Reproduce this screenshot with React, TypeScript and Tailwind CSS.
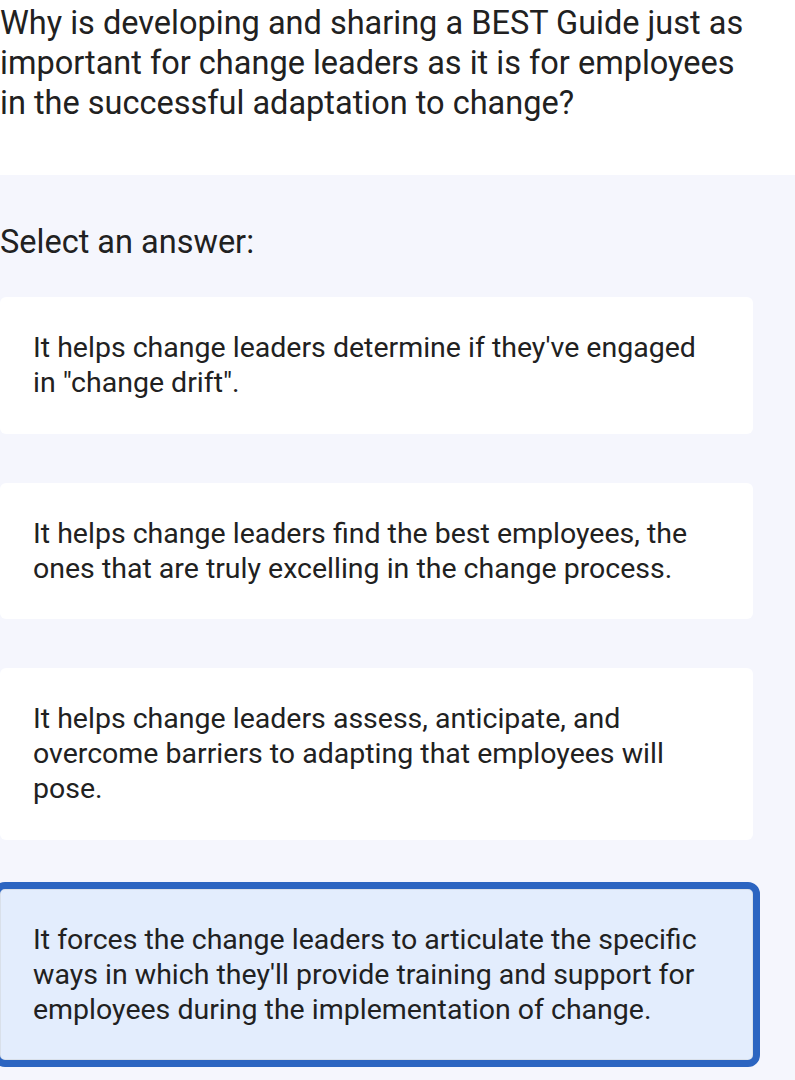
import React from 'react';

const answers = [
  { text: 'It helps change leaders determine if they\'ve engaged in "change drift".', selected: false },
  { text: 'It helps change leaders find the best employees, the ones that are truly excelling in the change process.', selected: false },
  { text: 'It helps change leaders assess, anticipate, and overcome barriers to adapting that employees will pose.', selected: false },
  { text: "It forces the change leaders to articulate the specific ways in which they'll provide training and support for employees during the implementation of change.", selected: true },
];

export default function App() {
  return (
    <div className="min-h-screen w-[795px] bg-white text-[#212121] font-['Roboto',sans-serif] overflow-hidden">
      {/* Question */}
      <div className="h-[175px] bg-white pt-[3px]">
        <h1 className="text-[32.5px] leading-[40px] font-normal pr-[30px]">
          Why is developing and sharing a BEST Guide just as important for change leaders as it is for employees in the successful adaptation to change?
        </h1>
      </div>

      {/* Answers */}
      <div className="bg-[#f5f6fd] pt-[49px] pb-[20px] min-h-[905px]">
        <p className="text-[32.5px] leading-[36px] mb-[37px]">Select an answer:</p>
        <div className="flex flex-col gap-[49px] w-[753px]">
          {answers.map((a, i) => (
            <button
              key={i}
              className={`text-left px-[33px] pt-[33px] pb-[33.5px] text-[28.5px] leading-[35px] ${
                a.selected
                  ? 'bg-[#e3edfd] outline-[7px] outline-solid outline-[#2c65c1] rounded-[5px] shadow-[inset_0_0_0_1px_#d9e0ea]'
                  : 'bg-white rounded-[6px]'
              }`}
            >
              {a.text}
            </button>
          ))}
        </div>
      </div>
    </div>
  );
}
